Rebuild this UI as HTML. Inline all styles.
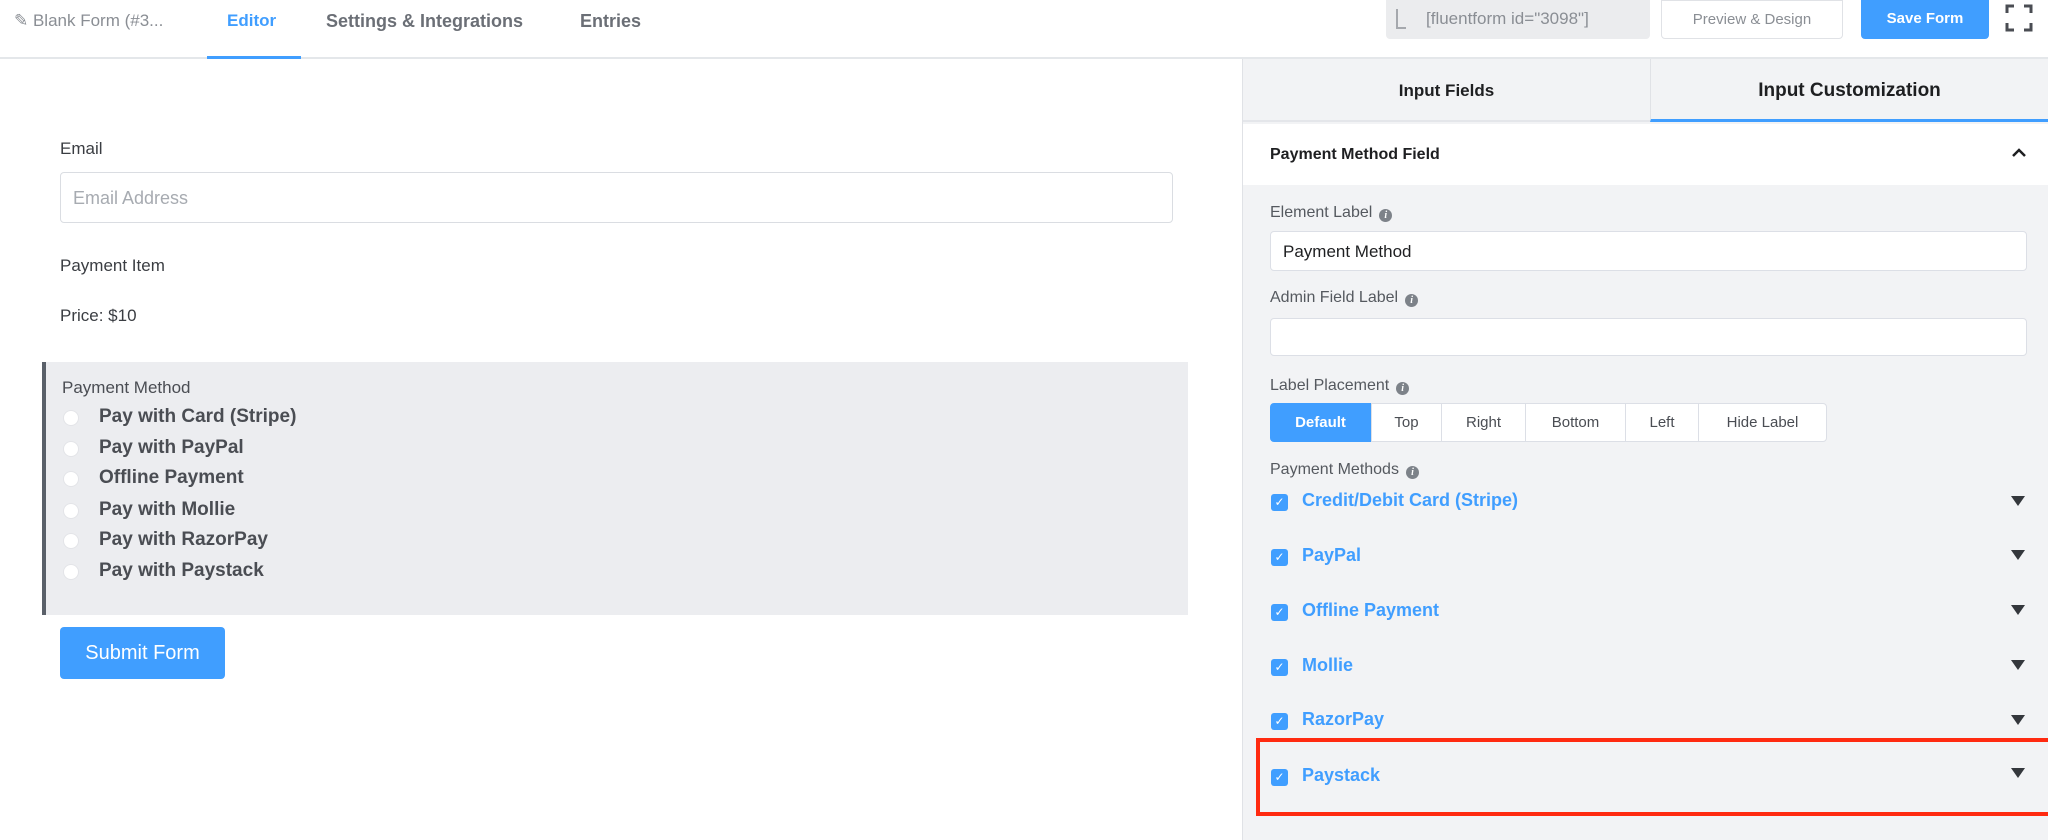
<!DOCTYPE html>
<html><head><meta charset="utf-8"><style>
*{box-sizing:border-box;margin:0;padding:0}
body{width:2048px;height:840px;overflow:hidden;background:#fff;font-family:"Liberation Sans",sans-serif;color:#1e1f21;position:relative}
.a{position:absolute}
.hdr{left:0;top:0;width:2048px;height:59px;border-bottom:2px solid #e4e7ea}
.tab{top:11px;font-size:17px;font-weight:bold;color:#6b6f76}
.lbl{font-size:17px;color:#3a3d42}
.radio{left:63px;width:16px;height:16px;border-radius:50%;background:#fff;border:1px solid #e3e4e8}
.rt{left:99px;font-size:19px;color:#4a4d53;font-weight:bold}
.rp{left:1242px;top:59px;width:806px;height:781px;background:#f2f3f5;border-left:1px solid #e0e2e6}
.pl{font-size:16px;color:#55595f}
.info{display:inline-block;width:13px;height:13px;border-radius:50%;background:#7d8289;color:#fff;font-size:10px;font-style:italic;font-weight:bold;text-align:center;line-height:13px;vertical-align:-1px;margin-left:7px;font-family:"Liberation Serif",serif}
.inp{left:1270px;width:757px;background:#fff;border:1px solid #dcdfe6;border-radius:4px}
.cb{left:1271px;width:17px;height:17px;background:#409eff;border-radius:3px;color:#fff;font-size:12px;text-align:center;line-height:17px}
.pm{left:1302px;font-size:18px;font-weight:bold;color:#409eff}
.tri{left:2011px;width:0;height:0;border-left:7px solid transparent;border-right:7px solid transparent;border-top:10px solid #34373c}
.bg{top:403px;height:39px;border:1px solid #dcdfe6;background:#fff;font-size:15px;color:#4a4d53;text-align:center;line-height:37px}
</style></head><body>
<div class="a hdr"></div>
<div class="a" style="left:14px;top:11px;font-size:17px;color:#8a8e94">✎ Blank Form (#3...</div>
<div class="a tab" style="left:227px;color:#409eff">Editor</div>
<div class="a" style="left:207px;top:56px;width:94px;height:3px;background:#409eff"></div>
<div class="a tab" style="left:326px;font-size:18px">Settings &amp; Integrations</div>
<div class="a tab" style="left:580px;font-size:18px">Entries</div>
<div class="a" style="left:1386px;top:0;width:264px;height:39px;background:#ebecee;border-radius:0 0 4px 4px;font-size:17px;color:#8a8e94;padding:9px 0 0 40px">[fluentform id="3098"]</div>
<div class="a" style="left:1396px;top:9px;width:10px;height:20px;border-left:2px solid #a5a8ad;border-bottom:2px solid #a5a8ad"></div>
<div class="a" style="left:1661px;top:0;width:182px;height:39px;border:1px solid #e0e2e6;border-radius:0 0 4px 4px;font-size:15px;color:#8a8e94;text-align:center;line-height:37px">Preview &amp; Design</div>
<div class="a" style="left:1861px;top:0;width:128px;height:39px;background:#409eff;border-radius:0 0 4px 4px;font-size:15px;font-weight:bold;color:#fff;text-align:center;line-height:37px">Save Form</div>
<svg class="a" style="left:2005px;top:4px" width="28" height="28" viewBox="0 0 28 28" fill="none" stroke="#4a4d53" stroke-width="3"><path d="M2 9V2h7M19 2h7v7M26 19v7h-7M9 26H2v-7"/></svg>

<div class="a lbl" style="left:60px;top:139px">Email</div>
<div class="a" style="left:60px;top:172px;width:1113px;height:51px;border:1px solid #dadde2;border-radius:4px;font-size:18px;color:#a7abb1;padding:15px 12px">Email Address</div>
<div class="a lbl" style="left:60px;top:256px">Payment Item</div>
<div class="a lbl" style="left:60px;top:306px">Price: $10</div>
<div class="a" style="left:42px;top:362px;width:1146px;height:253px;background:#ecedf0;border-left:4px solid #5a6069"></div>
<div class="a lbl" style="left:62px;top:378px;color:#4a4d53">Payment Method</div>
<div class="a radio" style="top:410px"></div><div class="a rt" style="top:406px">Pay with Card (Stripe)</div>
<div class="a radio" style="top:441px"></div><div class="a rt" style="top:437px">Pay with PayPal</div>
<div class="a radio" style="top:471px"></div><div class="a rt" style="top:467px">Offline Payment</div>
<div class="a radio" style="top:503px"></div><div class="a rt" style="top:499px">Pay with Mollie</div>
<div class="a radio" style="top:533px"></div><div class="a rt" style="top:529px">Pay with RazorPay</div>
<div class="a radio" style="top:564px"></div><div class="a rt" style="top:560px">Pay with Paystack</div>
<div class="a" style="left:60px;top:627px;width:165px;height:52px;background:#409eff;border-radius:4px;color:#fff;font-size:20px;text-align:center;line-height:52px">Submit Form</div>

<div class="a rp"></div>
<div class="a" style="left:1243px;top:59px;width:407px;height:63px;font-size:17px;font-weight:bold;text-align:center;line-height:63px;border-bottom:2px solid #e4e6ea">Input Fields</div>
<div class="a" style="left:1650px;top:59px;width:398px;height:63px;font-size:19px;font-weight:bold;text-align:center;line-height:63px;border-left:1px solid #e0e2e6;border-bottom:3px solid #409eff">Input Customization</div>
<div class="a" style="left:1243px;top:124px;width:805px;height:61px;background:#fff;font-size:16px;font-weight:bold;padding:22px 0 0 27px">Payment Method Field</div>
<svg class="a" style="left:2012px;top:148px" width="14" height="10" viewBox="0 0 14 10" fill="none" stroke="#1e1f21" stroke-width="2.5"><path d="M1 8L7 2L13 8"/></svg>
<div class="a pl" style="left:1270px;top:204px">Element Label<span class="info">i</span></div>
<div class="a inp" style="top:231px;height:40px;font-size:17px;padding:10px 12px">Payment Method</div>
<div class="a pl" style="left:1270px;top:289px">Admin Field Label<span class="info">i</span></div>
<div class="a inp" style="top:318px;height:38px"></div>
<div class="a pl" style="left:1270px;top:377px">Label Placement<span class="info">i</span></div>
<div class="a bg" style="left:1270px;width:101px;background:#409eff;border-color:#409eff;color:#fff;font-weight:bold;border-radius:4px 0 0 4px">Default</div>
<div class="a bg" style="left:1371px;width:71px">Top</div>
<div class="a bg" style="left:1441px;width:85px">Right</div>
<div class="a bg" style="left:1525px;width:101px">Bottom</div>
<div class="a bg" style="left:1625px;width:74px">Left</div>
<div class="a bg" style="left:1698px;width:129px;border-radius:0 4px 4px 0">Hide Label</div>
<div class="a pl" style="left:1270px;top:461px">Payment Methods<span class="info">i</span></div>
<div class="a cb" style="top:494px">✓</div><div class="a pm" style="top:490px">Credit/Debit Card (Stripe)</div><div class="a tri" style="top:496px"></div>
<div class="a cb" style="top:549px">✓</div><div class="a pm" style="top:545px">PayPal</div><div class="a tri" style="top:550px"></div>
<div class="a cb" style="top:604px">✓</div><div class="a pm" style="top:600px">Offline Payment</div><div class="a tri" style="top:605px"></div>
<div class="a cb" style="top:659px">✓</div><div class="a pm" style="top:655px">Mollie</div><div class="a tri" style="top:660px"></div>
<div class="a cb" style="top:713px">✓</div><div class="a pm" style="top:709px">RazorPay</div><div class="a tri" style="top:715px"></div>
<div class="a" style="left:1256px;top:738px;width:800px;height:78px;border:4px solid #ff2a10"></div>
<div class="a cb" style="top:769px">✓</div><div class="a pm" style="top:765px">Paystack</div><div class="a tri" style="top:768px"></div>
</body></html>
